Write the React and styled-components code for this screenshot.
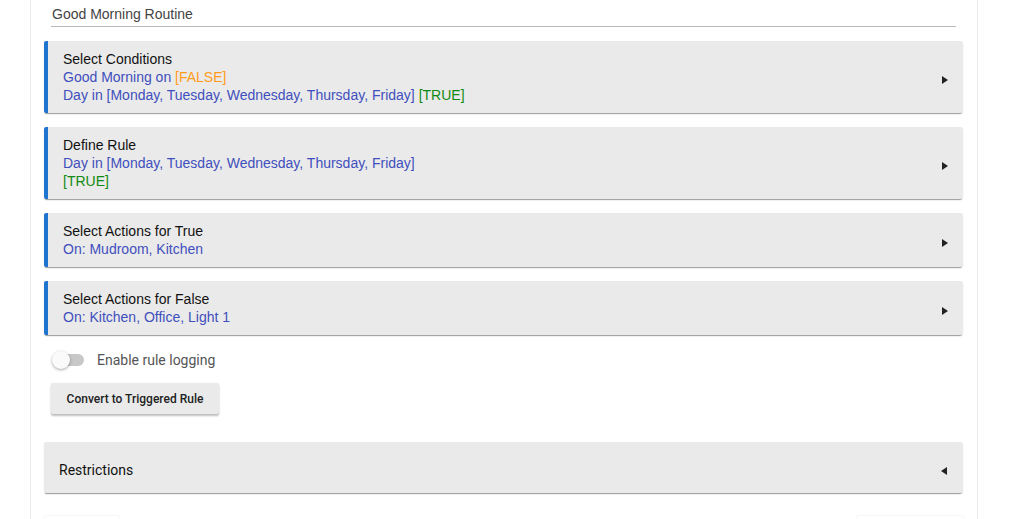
import React from "react";
import styled, { createGlobalStyle } from "styled-components";

const GlobalStyle = createGlobalStyle`
  html, body {
    margin: 0;
    padding: 0;
    background: #ffffff;
  }
  body {
    font-family: "Liberation Sans", Arial, sans-serif;
    font-size: 14px;
  }
`;

const sections = [
  {
    title: "Select Conditions",
    lines: [
      [
        { text: "Good Morning on ", tone: "blue" },
        { text: "[FALSE]", tone: "orange" },
      ],
      [
        { text: "Day in [Monday, Tuesday, Wednesday, Thursday, Friday] ", tone: "blue" },
        { text: "[TRUE]", tone: "green" },
      ],
    ],
  },
  {
    title: "Define Rule",
    lines: [
      [{ text: "Day in [Monday, Tuesday, Wednesday, Thursday, Friday]", tone: "blue" }],
      [{ text: "[TRUE]", tone: "green" }],
    ],
  },
  {
    title: "Select Actions for True",
    lines: [[{ text: "On: Mudroom, Kitchen", tone: "blue" }]],
  },
  {
    title: "Select Actions for False",
    lines: [[{ text: "On: Kitchen, Office, Light 1", tone: "blue" }]],
  },
];

const tones = {
  blue: "#3f4fbd",
  orange: "#ff9c1a",
  green: "#118a11",
};

const Page = styled.div`
  width: 1024px;
  height: 519px;
  overflow: hidden;
  padding-left: 30px;
  box-sizing: border-box;
`;

const Panel = styled.div`
  width: 948px;
  min-height: 519px;
  box-sizing: border-box;
  border-left: 1px solid #ececec;
  border-right: 1px solid #ececec;
  padding: 0 14px 0 13px;
`;

const NameField = styled.div`
  margin: 0 7px 0 7px;
  padding: 6px 0 4px 1px;
  border-bottom: 1px solid #b9b9b9;
  color: #444;
  font-size: 14px;
  line-height: 16px;
`;

const SectionList = styled.div`
  display: flex;
  flex-direction: column;
  gap: 14px;
  margin-top: 14px;
`;

const Card = styled.div`
  display: flex;
  align-items: center;
  background: #eaeaea;
  border-left: 4px solid #1f74cf;
  border-radius: 2px 3px 3px 2px;
  box-shadow: 0 2px 1px -1px rgba(0, 0, 0, 0.35), 0 1px 2px rgba(0, 0, 0, 0.08);
  padding: 9px 15px 9px 15px;
`;

const CardBody = styled.div`
  flex: 1;
  line-height: 18px;
`;

const CardTitle = styled.div`
  color: #111;
  font-size: 14px;
`;

const Line = styled.div`
  font-size: 14px;
`;

const Part = styled.span`
  color: ${(p) => tones[p.$tone]};
`;

const Arrow = styled.span`
  width: 0;
  height: 0;
  border-top: 4px solid transparent;
  border-bottom: 4px solid transparent;
  ${(p) =>
    p.$left
      ? "border-right: 6px solid #222; margin: 1px 1px 0 0;"
      : "border-left: 6px solid #222; margin: 5px 0 0 0;"}
`;

const PlainCard = styled(Card)`
  border-left: none;
  padding: 19px 15px 14px 15px;
  line-height: 18px;
  margin-top: 28px;
`;

const PlainTitle = styled.div`
  flex: 1;
  font-family: Roboto, "Liberation Sans", sans-serif;
  font-size: 14px;
  color: #111;
`;

const ToggleRow = styled.div`
  display: flex;
  align-items: center;
  gap: 13px;
  margin: 17px 0 0 8px;
`;

const Switch = styled.span`
  position: relative;
  display: inline-block;
  width: 32px;
  height: 14px;
`;

const Track = styled.span`
  position: absolute;
  left: 2px;
  right: 0;
  top: 1px;
  height: 12px;
  border-radius: 7px;
  background: #c8c8c8;
`;

const Knob = styled.span`
  position: absolute;
  left: 0;
  top: -2px;
  width: 18px;
  height: 18px;
  border-radius: 50%;
  background: #fafafa;
  box-shadow: 0 1px 3px rgba(0, 0, 0, 0.35);
`;

const ToggleLabel = styled.span`
  font-family: Roboto, "Liberation Sans", sans-serif;
  color: #555;
  font-size: 14px;
`;

const ActionButton = styled.button`
  display: block;
  margin: 15px 0 0 7px;
  height: 31px;
  width: 168px;
  border: none;
  border-radius: 2px;
  background: #eaeaea;
  box-shadow: 0 2px 2px rgba(0, 0, 0, 0.25), 0 0 1px rgba(0, 0, 0, 0.1);
  font-family: Roboto, "Liberation Sans", sans-serif;
  font-weight: 500;
  font-size: 12px;
  color: #222;
  padding: 0;
`;

const Footer = styled.div`
  display: flex;
  justify-content: space-between;
  margin-top: 23px;
  padding: 0 0 0 1px;
`;

const GhostButton = styled.div`
  width: ${(p) => p.$w}px;
  height: 30px;
  border-radius: 2px;
  background: #fff;
  box-shadow: 0 0 2px rgba(0, 0, 0, 0.12);
`;

const Section = ({ title, lines }) => (
  <Card>
    <CardBody>
      <CardTitle>{title}</CardTitle>
      {lines.map((parts, i) => (
        <Line key={i}>
          {parts.map((p, j) => (
            <Part key={j} $tone={p.tone}>
              {p.text}
            </Part>
          ))}
        </Line>
      ))}
    </CardBody>
    <Arrow />
  </Card>
);

const App = () => {
  return (
    <Page>
      <GlobalStyle />
      <Panel>
        <NameField>Good Morning Routine</NameField>
        <SectionList>
          {sections.map((s) => (
            <Section key={s.title} {...s} />
          ))}
        </SectionList>
        <ToggleRow>
          <Switch>
            <Track />
            <Knob />
          </Switch>
          <ToggleLabel>Enable rule logging</ToggleLabel>
        </ToggleRow>
        <ActionButton>Convert to Triggered Rule</ActionButton>
        <PlainCard>
          <PlainTitle>Restrictions</PlainTitle>
          <Arrow $left />
        </PlainCard>
        <Footer>
          <GhostButton $w={74} />
          <GhostButton $w={106} />
        </Footer>
      </Panel>
    </Page>
  );
};

export default App;
